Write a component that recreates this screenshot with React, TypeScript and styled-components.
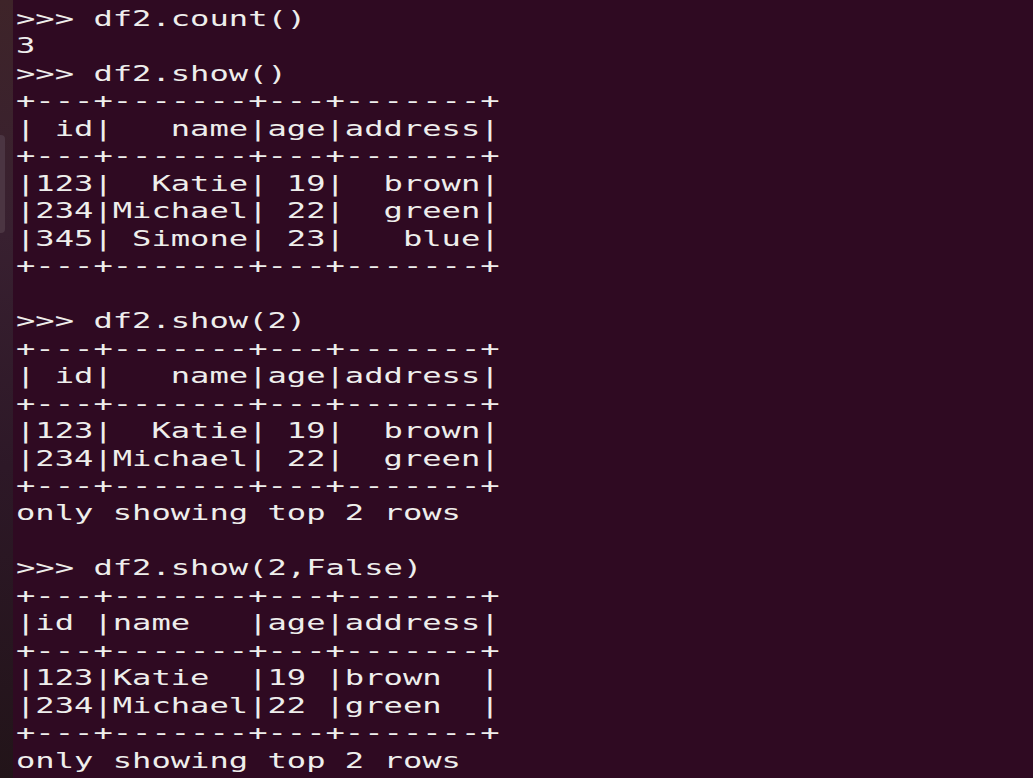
import React from "react";
import styled, { createGlobalStyle } from "styled-components";

const GlobalStyle = createGlobalStyle`
  html, body {
    margin: 0;
    padding: 0;
    background: #2f0a22;
    overflow: hidden;
  }
`;

const Window = styled.div`
  display: flex;
  flex-direction: row;
  width: 1033px;
  height: 778px;
  background: #2f0a22;
  overflow: hidden;
`;

const Dock = styled.div`
  display: flex;
  flex-direction: column;
  flex: 0 0 13px;
  padding-top: 135px;
  box-sizing: border-box;
  background: linear-gradient(180deg, #3e2429 0%, #382030 30%, #2d1827 60%, #221419 100%);
`;

const DockItem = styled.div`
  width: 5px;
  height: 98px;
  border-radius: 0 4px 4px 0;
  background: #4b3542;
`;

const Terminal = styled.div`
  flex: 1;
  padding: 6px 0 0 3px;
  box-sizing: border-box;
  background: #2f0a22;
`;

const Output = styled.div`
  font-family: "DejaVu Sans Mono", "Liberation Mono", monospace;
  font-size: 21px;
  line-height: 27.48px;
  color: #eeeeec;
  transform: scaleX(1.53);
  transform-origin: left top;
  -webkit-font-smoothing: antialiased;
`;

const Line = styled.div`
  white-space: pre;
  height: 27.48px;
`;

const lines = [
  ">>> df2.count()",
  "3",
  ">>> df2.show()",
  "+---+-------+---+-------+",
  "| id|   name|age|address|",
  "+---+-------+---+-------+",
  "|123|  Katie| 19|  brown|",
  "|234|Michael| 22|  green|",
  "|345| Simone| 23|   blue|",
  "+---+-------+---+-------+",
  "",
  ">>> df2.show(2)",
  "+---+-------+---+-------+",
  "| id|   name|age|address|",
  "+---+-------+---+-------+",
  "|123|  Katie| 19|  brown|",
  "|234|Michael| 22|  green|",
  "+---+-------+---+-------+",
  "only showing top 2 rows",
  "",
  ">>> df2.show(2,False)",
  "+---+-------+---+-------+",
  "|id |name   |age|address|",
  "+---+-------+---+-------+",
  "|123|Katie  |19 |brown  |",
  "|234|Michael|22 |green  |",
  "+---+-------+---+-------+",
  "only showing top 2 rows",
];

export default function App() {
  return (
    <>
      <GlobalStyle />
      <Window>
        <Dock>
          <DockItem />
        </Dock>
        <Terminal>
          <Output>
            {lines.map((l, i) => (
              <Line key={i}>{l}</Line>
            ))}
          </Output>
        </Terminal>
      </Window>
    </>
  );
}
